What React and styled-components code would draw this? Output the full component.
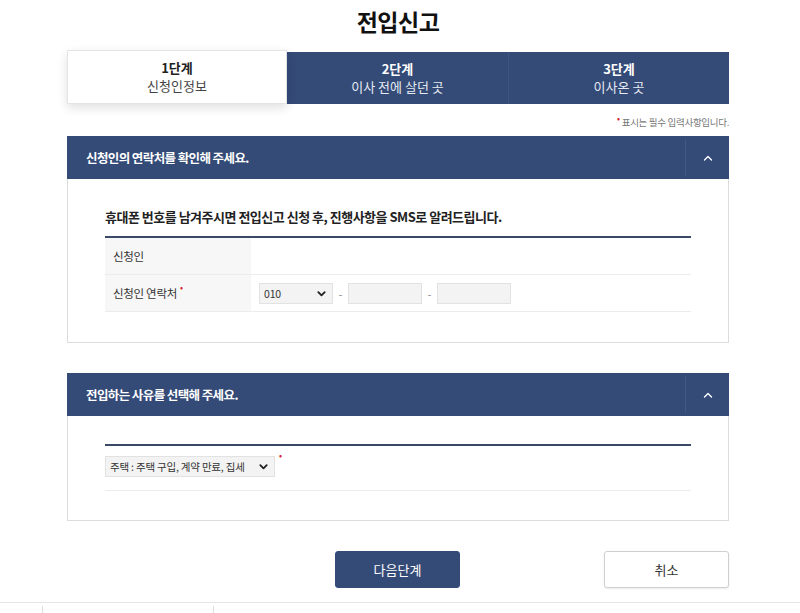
import React from 'react';
import styled, { createGlobalStyle } from 'styled-components';

const NAVY = '#344a77';

const Global = createGlobalStyle`
  html, body {
    margin: 0;
    padding: 0;
    background: #fff;
    font-family: "Noto Sans CJK KR", "Noto Sans", sans-serif;
    color: #222;
  }
`;

const Page = styled.div`
  width: 800px;
  height: 613px;
  overflow: hidden;
  position: relative;
`;

const Wrap = styled.div`
  width: 662px;
  margin-left: 67px;
`;

const Title = styled.h1`
  margin: 0;
  padding-top: 4px;
  height: 46px;
  box-sizing: border-box;
  font-size: 23px;
  font-weight: 700;
  text-align: center;
  letter-spacing: -0.5px;
  color: #111;
`;

const Steps = styled.div`
  display: grid;
  grid-template-columns: 220px 221px 221px;
  height: 52px;
  margin-top: 6px;
  background: ${NAVY};
`;

const Step = styled.div`
  display: flex;
  flex-direction: column;
  align-items: center;
  justify-content: center;
  color: ${p => (p.$active ? '#222' : '#fff')};
  background: ${p => (p.$active ? '#fff' : NAVY)};
  border-left: ${p => (p.$divider ? '1px solid #3d5582' : 'none')};
  ${p => p.$active && `
    margin-top: -2px;
    border: 1px solid #e4e4e4;
    box-shadow: 0 4px 10px rgba(0,0,0,0.12);
    position: relative;
    z-index: 1;
  `}
`;

const StepNum = styled.span`
  font-size: 13px;
  font-weight: 700;
  line-height: 18px;
`;

const StepName = styled.span`
  font-size: 13px;
  font-weight: 400;
  line-height: 18px;
  color: ${p => (p.$active ? '#444' : '#e6eaf2')};
`;

const Note = styled.div`
  text-align: right;
  font-size: 9.5px;
  color: #777;
  height: 32px;
  padding-top: 11px;
  box-sizing: border-box;
  letter-spacing: -0.3px;
`;

const Dot = styled.span`
  color: #d8232a;
  font-size: 9px;
  position: relative;
  top: ${p => p.$top || '-4px'};
  margin-right: 2px;
  margin-left: ${p => p.$gap || '0'};
`;

const Section = styled.section`
  border: 1px solid #dcdcdc;
  border-top: none;
  margin-bottom: ${p => p.$mb || '0'};
`;

const SectionHead = styled.div`
  height: 43px;
  background: ${NAVY};
  display: flex;
  align-items: stretch;
  margin: 0 -1px;
`;

const SectionTitle = styled.h2`
  flex: 1;
  margin: 0;
  padding-left: 19px;
  display: flex;
  align-items: center;
  font-size: 12.5px;
  font-weight: 700;
  color: #fff;
  letter-spacing: -0.6px;
`;

const Toggle = styled.div`
  width: 43px;
  display: flex;
  align-items: center;
  justify-content: center;
  border-left: 1px solid #405987;
  margin: 3px 0;
`;

const Body = styled.div`
  padding: ${p => p.$pad};
  padding-left: 37px;
  padding-right: 37px;
`;

const Lead = styled.p`
  margin: 0 0 10px;
  font-size: 13px;
  font-weight: 700;
  letter-spacing: -0.5px;
  color: #222;
`;

const Table = styled.div`
  border-top: 2px solid #3a4a66;
`;

const Row = styled.div`
  display: grid;
  grid-template-columns: ${p => p.$cols || '146px 1fr'};
  border-bottom: 1px solid #ececec;
  min-height: ${p => p.$h || '36px'};
`;

const Label = styled.div`
  background: #f7f7f7;
  display: flex;
  align-items: center;
  padding-left: 8px;
  font-size: 11.5px;
  color: #333;
  letter-spacing: -0.3px;
`;

const Cell = styled.div`
  display: flex;
  align-items: ${p => p.$align || 'center'};
  padding: ${p => p.$pad || '0 0 0 8px'};
  font-size: 11px;
  color: #555;
`;

const Select = styled.div`
  display: flex;
  align-items: center;
  justify-content: space-between;
  box-sizing: border-box;
  width: ${p => p.$w};
  height: 21px;
  padding: 0 5px 0 4px;
  background: #f3f3f3;
  border: 1px solid #e2e2e2;
  font-size: 10.5px;
  color: #333;
  letter-spacing: -0.2px;
  white-space: nowrap;
`;

const Input = styled.div`
  width: 74px;
  height: 21px;
  box-sizing: border-box;
  background: #f3f3f3;
  border: 1px solid #e2e2e2;
`;

const Dash = styled.span`
  width: 15px;
  text-align: center;
  color: #777;
  font-size: 10px;
`;

const Buttons = styled.div`
  display: grid;
  grid-template-columns: 268px 125px 144px 125px;
  margin-top: 30px;
  height: 37px;
`;

const Button = styled.button`
  grid-column: ${p => p.$col};
  font-family: inherit;
  font-size: 13px;
  border-radius: 3px;
  cursor: pointer;
  color: ${p => (p.$primary ? '#fff' : '#333')};
  background: ${p => (p.$primary ? NAVY : '#fff')};
  border: 1px solid ${p => (p.$primary ? NAVY : '#cfcfcf')};
  box-shadow: ${p => (p.$primary ? 'none' : '0 1px 2px rgba(0,0,0,0.08)')};
`;

const Footer = styled.div`
  position: absolute;
  left: 0;
  right: 0;
  top: 602px;
  height: 11px;
  border-top: 1px solid #e6e6e6;
  display: flex;
`;

const FooterTick = styled.span`
  width: 1px;
  height: 10px;
  margin-top: 3px;
  background: #ddd;
  margin-left: ${p => p.$ml};
`;

const Chevron = ({ size = 12, color = '#fff', down }) => (
  <svg width={size} height={size} viewBox="0 0 12 12" fill="none">
    <path
      d={down ? 'M2.5 4.5 L6 8 L9.5 4.5' : 'M2.5 8 L6 4.5 L9.5 8'}
      stroke={color}
      strokeWidth={down ? 2 : 1.4}
      strokeLinecap="round"
      strokeLinejoin="round"
    />
  </svg>
);

const steps = [
  { num: '1단계', name: '신청인정보' },
  { num: '2단계', name: '이사 전에 살던 곳' },
  { num: '3단계', name: '이사온 곳' },
];

export default function App() {
  return (
    <Page>
      <Global />
      <Wrap>
        <Title>전입신고</Title>
        <Steps>
          {steps.map((s, i) => (
            <Step key={s.num} $active={i === 0} $divider={i === 2}>
              <StepNum>{s.num}</StepNum>
              <StepName $active={i === 0}>{s.name}</StepName>
            </Step>
          ))}
        </Steps>
        <Note>
          <Dot>•</Dot>표시는 필수 입력사항입니다.
        </Note>

        <Section $mb="30px">
          <SectionHead>
            <SectionTitle>신청인의 연락처를 확인해 주세요.</SectionTitle>
            <Toggle>
              <Chevron />
            </Toggle>
          </SectionHead>
          <Body $pad="28px 0 30px">
            <Lead>휴대폰 번호를 남겨주시면 전입신고 신청 후, 진행사항을 SMS로 알려드립니다.</Lead>
            <Table>
              <Row>
                <Label>신청인</Label>
                <Cell />
              </Row>
              <Row>
                <Label>
                  신청인 연락처<Dot $gap="3px" $top="-6px">•</Dot>
                </Label>
                <Cell>
                  <Select $w="74px">
                    010 <Chevron size={11} color="#222" down />
                  </Select>
                  <Dash>-</Dash>
                  <Input />
                  <Dash>-</Dash>
                  <Input />
                </Cell>
              </Row>
            </Table>
          </Body>
        </Section>

        <Section>
          <SectionHead>
            <SectionTitle>전입하는 사유를 선택해 주세요.</SectionTitle>
            <Toggle>
              <Chevron />
            </Toggle>
          </SectionHead>
          <Body $pad="28px 0 29px">
            <Table>
              <Row $cols="1fr" $h="44px">
                <Cell $pad="10px 0 0 0" $align="flex-start">
                  <Select $w="170px">
                    주택 : 주택 구입, 계약 만료, 집세 <Chevron size={11} color="#222" down />
                  </Select>
                  <Dot $gap="4px" $top="-7px">•</Dot>
                </Cell>
              </Row>
            </Table>
          </Body>
        </Section>

        <Buttons>
          <Button $col="2" $primary>다음단계</Button>
          <Button $col="4">취소</Button>
        </Buttons>
      </Wrap>
      <Footer>
        <FooterTick $ml="42px" />
        <FooterTick $ml="170px" />
      </Footer>
    </Page>
  );
}
